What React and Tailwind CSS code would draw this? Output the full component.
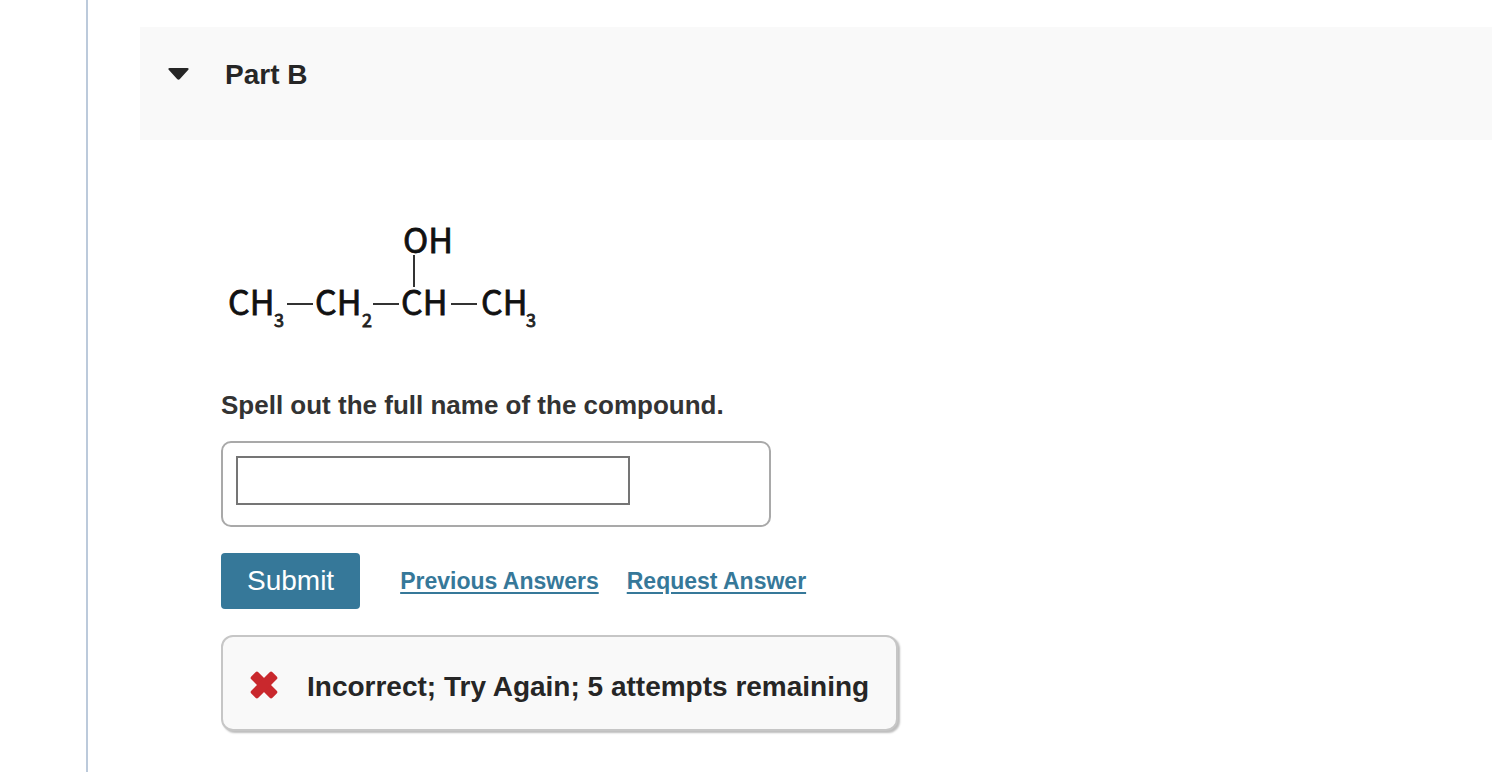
import { useState } from "react";

function Caret() {
  return (
    <svg className="w-[22px] h-3 mb-[3px]" viewBox="0 0 22 12" aria-hidden="true">
      <path
        d="M1.6 0H19.4C20.6 0 21 1 20.3 1.8L11.9 10.9C11 11.9 10 11.9 9.1 10.9L.7 1.8C0 1 .4 0 1.6 0Z"
        fill="#262626"
      />
    </svg>
  );
}

function Cross() {
  return (
    <svg className="w-7 h-7 mb-[5px] shrink-0" viewBox="0 0 28 28" aria-hidden="true">
      <g fill="#c9282d">
        <rect x="-1" y="9" width="30" height="10" rx="2" transform="rotate(45 14 14)" />
        <rect x="-1" y="9" width="30" height="10" rx="2" transform="rotate(-45 14 14)" />
      </g>
    </svg>
  );
}

function Molecule() {
  return (
    <svg
      className="block w-[330px] h-[140px] font-['Noto_Sans_CJK_SC',sans-serif]"
      viewBox="0 -20 330 140"
      role="img"
      aria-label="CH3-CH2-CH(OH)-CH3"
    >
      <g fill="#111" stroke="#111" strokeWidth="0.8" fontSize="34">
        <text x="182" y="33">OH</text>
        <text x="7" y="95">CH</text>
        <text x="94" y="95">CH</text>
        <text x="180" y="95">CH</text>
        <text x="260" y="95">CH</text>
      </g>
      <g fill="#222" stroke="#222" strokeWidth="0.8" fontSize="18">
        <text x="53" y="107">3</text>
        <text x="141" y="107">2</text>
        <text x="305" y="107">3</text>
      </g>
      <path
        d="M66 84H92M152 84H178M230 84H256M193 35V67"
        stroke="#333"
        strokeWidth="2"
        fill="none"
      />
    </svg>
  );
}

function App() {
  const [answer, setAnswer] = useState("");

  function handleSubmit(e) {
    e.preventDefault();
  }

  return (
    <div className="min-h-screen bg-white font-['Liberation_Sans',Arial,sans-serif] text-[#262626]">
      <main className="ml-[86px] min-h-screen border-l-2 border-[#bccadb] pl-[52px] pt-[27px]">
        <header className="bg-[#f9f9f9] pl-7 pt-[30px] pb-[47px]">
          <button type="button" className="flex items-center gap-[35px]">
            <Caret />
            <h2 className="text-[28px] leading-9 font-bold">Part B</h2>
          </button>
        </header>
        <form className="pl-[81px] pt-[60px]" onSubmit={handleSubmit}>
          <Molecule />
          <label
            htmlFor="answer"
            className="block mt-[47px] text-[26px] leading-9 font-bold text-[#333]"
          >
            Spell out the full name of the compound.
          </label>
          <div className="mt-[18px] max-w-[550px] h-[86px] rounded-[10px] border-2 border-[#a9a9a9] p-[13px]">
            <input
              id="answer"
              type="text"
              className="block w-full max-w-[394px] h-[49px] border-2 border-[#757575] px-2 text-[26px]"
              value={answer}
              onChange={(e) => setAnswer(e.target.value)}
            />
          </div>
          <div className="mt-[26px] flex items-center text-[23px] font-bold text-[#367899]">
            <button
              type="submit"
              className="mr-10 h-14 rounded-sm bg-[#367899] px-[26px] text-[28px] font-normal text-white"
            >
              Submit
            </button>
            <a href="#previous" className="mr-7 underline decoration-2 underline-offset-3">
              Previous Answers
            </a>
            <a href="#request" className="underline decoration-2 underline-offset-3">
              Request Answer
            </a>
          </div>
          <div
            role="status"
            className="mt-[26px] flex w-fit items-center gap-[29px] rounded-xl border-2 border-[#c6c6c6] bg-[#f9f9f9] px-[27px] pt-[30px] pb-[22px] shadow-[2px_2px_2px_#bdbdbd]"
          >
            <Cross />
            <p className="text-[28px] leading-10 font-bold">
              Incorrect; Try Again; 5 attempts remaining
            </p>
          </div>
        </form>
      </main>
    </div>
  );
}

export default App;
